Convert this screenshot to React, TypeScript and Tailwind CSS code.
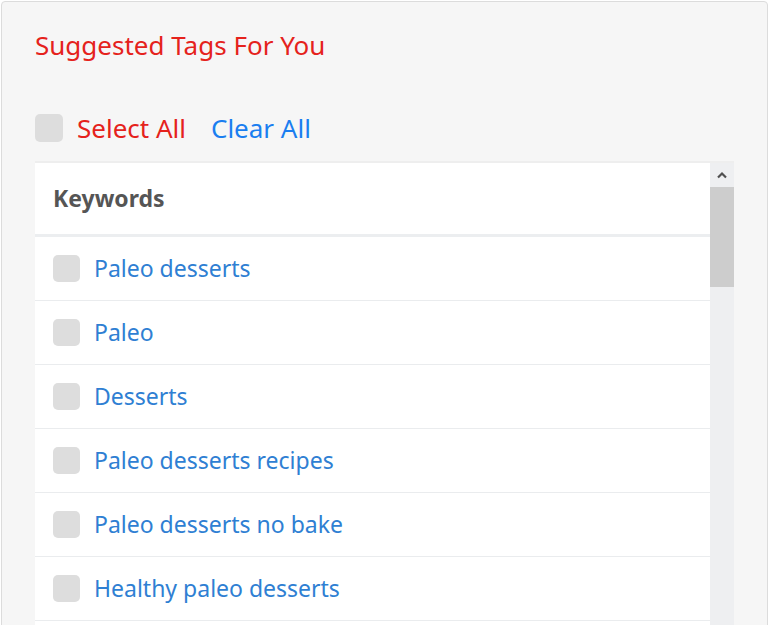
import React from 'react';

const keywords = [
    'Paleo desserts',
    'Paleo',
    'Desserts',
    'Paleo desserts recipes',
    'Paleo desserts no bake',
    'Healthy paleo desserts',
];

function Box({ size = 'w-[27px] h-[27px]' }: { size?: string }) {
    return <span className={`${size} shrink-0 rounded-[5px] bg-[#dddddd]`} />;
}

export default function App() {
    return (
        <div className="h-[625px] overflow-hidden bg-white pt-px pl-px font-['Noto_Sans',sans-serif]">
            {/* Outer panel */}
            <div className="h-[700px] rounded-tl-[4px] rounded-tr-[4px] border border-[#dcdcdc] bg-[#f6f6f6] pl-[33px] pr-[33px]">
                <h2 className="mt-[25px] text-[26px] leading-[36px] text-[#e5221c]">Suggested Tags For You</h2>

                <div className="mt-[49px] flex items-center">
                    <Box size="w-[28px] h-[28px]" />
                    <span className="ml-[14px] text-[26px] leading-[32px] text-[#e5221c]">Select All</span>
                    <span className="ml-[25px] text-[26px] leading-[32px] text-[#1a7ef0]">Clear All</span>
                </div>

                {/* Keyword list */}
                <div className="mt-[17px] flex h-[500px] border-t-2 border-[#eeeeee] bg-white">
                    <div className="flex-1 overflow-hidden">
                        <div className="flex h-[74px] items-center border-b-[3px] border-[#eceef0] pl-[18px]">
                            <span className="text-[23px] font-bold text-[#555555]">Keywords</span>
                        </div>
                        {keywords.map((k) => (
                            <div key={k} className="flex h-[64px] items-center border-b border-[#eaecee] pl-[18px]">
                                <Box />
                                <span className="ml-[14px] text-[23px] text-[#2f7fd3]">{k}</span>
                            </div>
                        ))}
                    </div>

                    {/* Scrollbar */}
                    <div className="flex w-[24px] flex-col bg-[#eeeff1]">
                        <div className="flex h-[24px] items-center justify-center">
                            <svg width="10" height="8" viewBox="0 0 10 8">
                                <path d="M1 6.5 L5 2.5 L9 6.5" fill="none" stroke="#505050" strokeWidth="2.2" />
                            </svg>
                        </div>
                        <div className="h-[100px] bg-[#cdcdcd]" />
                    </div>
                </div>
            </div>
        </div>
    );
}
